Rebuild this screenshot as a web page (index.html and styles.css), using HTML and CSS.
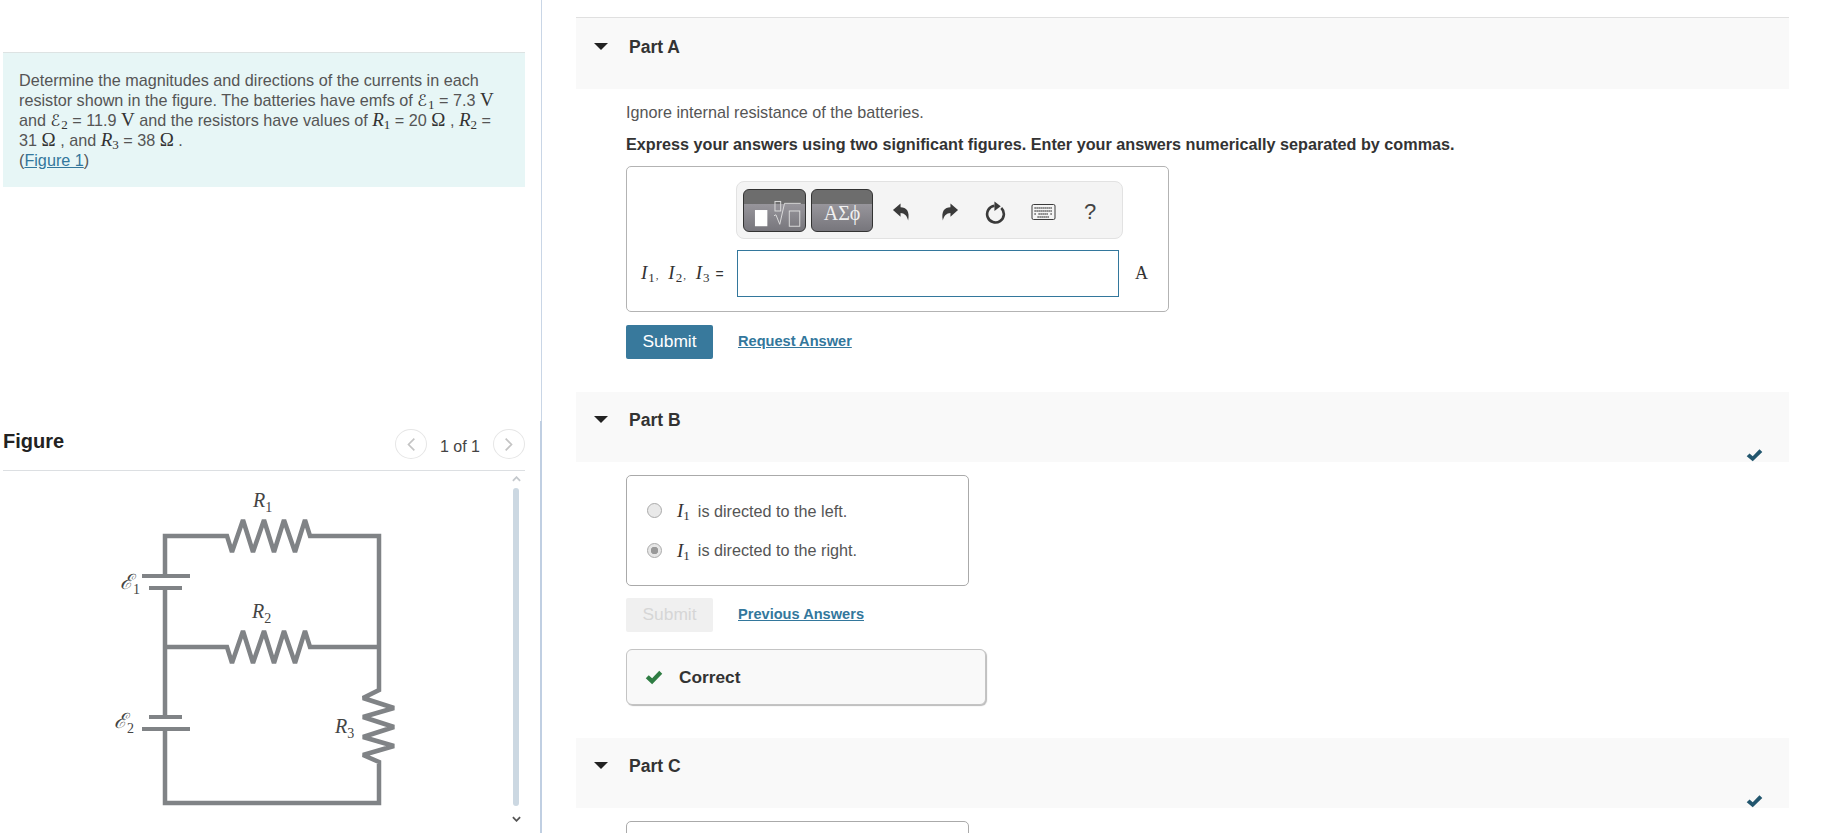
FILE: index.html
```html
<!DOCTYPE html>
<html lang="en">
<head>
<meta charset="utf-8">
<title>Part A</title>
<link rel="stylesheet" href="styles.css">
</head>
<body>
<div class="page">
  <aside class="left">
    <section class="top">
      <div class="problem">Determine the magnitudes and directions of the currents in each resistor shown in the figure. The batteries have emfs of <span class="m"><i class="scr">ℰ</i><sub>1</sub></span> = 7.3 <span class="m">V</span> and <span class="m"><i class="scr">ℰ</i><sub>2</sub></span> = 11.9 <span class="m">V</span> and the resistors have values of <span class="m"><i>R</i><sub>1</sub></span> = 20 <span class="m">Ω</span> , <span class="m"><i>R</i><sub>2</sub></span> = 31 <span class="m">Ω</span> , and <span class="m"><i>R</i><sub>3</sub></span> = 38 <span class="m">Ω</span> .<br>(<a href="#" class="link">Figure 1</a>)</div>
    </section>
    <section class="figure">
      <div class="fig-head">
        <h2 class="fig-title">Figure</h2>
        <div class="pager">
          <span class="circle"><svg class="chev" viewBox="0 0 12 18"><path d="M10 2 3 9l7 7"/></svg></span>
          <span class="pager-text">1 of 1</span>
          <span class="circle"><svg class="chev" viewBox="0 0 12 18"><path d="M2 2l7 7-7 7"/></svg></span>
        </div>
      </div>
      <div class="fig-body">
        <svg class="circuit" viewBox="3 471 504 362">
          <path class="wire" d="M165 576V536H227L232 552 243 520 253 552 264 520 274 552 284 520 295 552 305 520 310 536H379V690L363 698 394 708 363 717 394 727 363 737 394 746 363 755 379 762V803H165V729"/>
          <path class="wire" d="M165 717V588"/>
          <path class="wire" d="M165 647H227L232 663 243 631 253 663 264 631 274 663 284 631 295 663 305 631 310 647H379"/>
          <path class="plate" d="M142 576H190M149 588H182M149 717H182M142 729H190"/>
          <text class="lbl" x="253" y="507">R<tspan class="sb" dy="5">1</tspan></text>
          <text class="lbl" x="252" y="618">R<tspan class="sb" dy="5">2</tspan></text>
          <text class="lbl" x="335" y="733">R<tspan class="sb" dy="5">3</tspan></text>
          <text class="lbl scr-l" x="120" y="589">ℰ<tspan class="sb" dy="5">1</tspan></text>
          <text class="lbl scr-l" x="114" y="728">ℰ<tspan class="sb" dy="5">2</tspan></text>
        </svg>
        <div class="scroll">
          <svg class="arrow" viewBox="0 0 10 6"><path d="M1 5l4-4 4 4"/></svg>
          <div class="thumb"></div>
          <svg class="arrow dark" viewBox="0 0 10 6"><path d="M1 1l4 4 4-4"/></svg>
        </div>
      </div>
    </section>
  </aside>
  <main class="right">
    <header class="part first">
      <span class="tri"></span><h3 class="part-title">Part A</h3>
    </header>
    <div class="body">
      <p class="intro">Ignore internal resistance of the batteries.</p>
      <p class="bold">Express your answers using two significant figures. Enter your answers numerically separated by commas.</p>
      <div class="answer">
        <div class="toolbar">
          <span class="tb tb1"><svg class="tb-svg" viewBox="0 0 63 43"><rect class="fill" x="11" y="21" width="13" height="17"/><rect class="box" x="32" y="12" width="6" height="10"/><path class="box" d="M31 27l2-1 4 10 5-22h17"/><rect class="box" x="47" y="22" width="11" height="16"/></svg></span>
          <span class="tb tb2"><span class="greek">ΑΣϕ</span></span>
          <svg class="ic i-undo" viewBox="0 0 20 20"><path d="M1 8 9 1V5C15 5 19 9 17 19 16 14 13 11 9 11V15Z"/></svg>
          <svg class="ic i-redo" viewBox="0 0 20 20"><path d="M19 8 11 1V5C5 5 1 9 3 19 4 14 7 11 11 11V15Z"/></svg>
          <svg class="ic i-reset" viewBox="0 0 20 22"><path class="arc" d="M15.500 6.700A8 8 0 1 1 9 4.560"/><path d="M9 .5 15 5 9 9.500Z"/></svg>
          <svg class="ic i-key" viewBox="0 0 24 16"><rect class="kb" x=".5" y=".5" width="23" height="15" rx="1.5"/><path class="keys" d="M3 4h18M3 7h18M3 10h2M7 10h10M19 10h2M6 13h12"/></svg>
          <span class="help">?</span>
        </div>
        <div class="row">
          <label class="eq"><span class="m"><i>I</i><sub>1</sub><small>,</small> <i>I</i><sub>2</sub><small>,</small> <i>I</i><sub>3</sub></span><span class="eq-sign">=</span></label>
          <div class="input"></div>
          <span class="unit">A</span>
        </div>
      </div>
      <div class="actions">
        <button class="btn">Submit</button>
        <a href="#" class="link strong">Request Answer</a>
      </div>
    </div>
    <header class="part">
      <span class="tri"></span><h3 class="part-title">Part B</h3>
      <svg class="done" viewBox="0 0 24 24"><path d="M1 13 5 9 9.5 13 19 3 23 7 9.500 20Z"/></svg>
    </header>
    <div class="body">
      <div class="options">
        <div class="opt"><span class="radio"></span><span class="m"><i>I</i><sub>1</sub></span><span class="opt-text">is directed to the left.</span></div>
        <div class="opt"><span class="radio on"></span><span class="m"><i>I</i><sub>1</sub></span><span class="opt-text">is directed to the right.</span></div>
      </div>
      <div class="actions tight">
        <button class="btn off" disabled>Submit</button>
        <a href="#" class="link strong">Previous Answers</a>
      </div>
      <div class="correct">
        <svg class="tick" viewBox="0 0 24 20"><path d="M1 11 5 7 9.500 11 19 1 23 5 9.500 19Z"/></svg>
        <strong class="correct-text">Correct</strong>
      </div>
    </div>
    <header class="part">
      <span class="tri"></span><h3 class="part-title">Part C</h3>
      <svg class="done" viewBox="0 0 24 24"><path d="M1 13 5 9 9.5 13 19 3 23 7 9.500 20Z"/></svg>
    </header>
    <div class="body">
      <div class="options"></div>
    </div>
  </main>
</div>
</body>
</html>
```
FILE: styles.css
```css
* { box-sizing: border-box; }
html, body { margin: 0; height: 833px; overflow: hidden; background: #fff; }
body { font: 16.2px/20px "Liberation Sans", Arial, sans-serif; color: #555; }
.page { display: flex; height: 833px; }

.left { width: 542px; flex: none; display: flex; flex-direction: column; }
.top { height: 421px; padding: 52px 0 0 3px; border-right: 1px solid #c9d6e6; }
.problem { width: 522px; height: 135px; padding: 17px 12px 0 16px; background: #e7f6f6; border-top: 1px solid #dde3e3; }
.m { font-family: "Liberation Serif", "DejaVu Serif", serif; font-size: 19px; line-height: 1; color: #333; }
.m sub { font-size: 13px; line-height: 0; vertical-align: -3px; font-style: normal; }
.m small { font-size: 11px; margin-right: 3px; }
.scr { font-family: "DejaVu Sans", serif; font-size: 16px; line-height: 0; margin-right: 1px; }
.link { color: #33779c; text-decoration: underline; }
.strong { font-weight: 700; font-size: 14.6px; position: relative; top: -1px; }

.figure { flex: 1; border-right: 2px solid #c0cfe2; padding-left: 3px; display: flex; flex-direction: column; }
.fig-head { width: 522px; height: 50px; border-bottom: 1px solid #dcdfe2; display: flex; justify-content: space-between; align-items: flex-start; padding-top: 8px; }
.fig-title { margin: 0; font-size: 20px; line-height: 24px; font-weight: 700; color: #222; }
.pager { display: flex; align-items: center; gap: 13px; }
.circle { width: 32px; height: 30px; border: 1px solid #e6e6e6; border-radius: 50%; display: flex; align-items: center; justify-content: center; }
.chev { width: 10px; height: 15px; fill: none; stroke: #c4c4c4; stroke-width: 2; }
.pager-text { position: relative; top: 3px; font-size: 16px; color: #444; }
.fig-body { display: flex; height: 361px; }
.circuit { width: 504px; height: 362px; flex: none; }
.wire { fill: none; stroke: #808386; stroke-width: 4.5; stroke-linejoin: miter; stroke-miterlimit: 2; }
.plate { fill: none; stroke: #808386; stroke-width: 4; }
.lbl { font: italic 20px "Liberation Serif", "DejaVu Serif", serif; fill: #444; }
.scr-l { font-size: 21px; }
.sb { font-size: 14px; font-style: normal; }
.scroll { width: 18px; display: flex; flex-direction: column; align-items: center; padding-top: 5px; }
.arrow { width: 9px; height: 6px; fill: none; stroke: #c4c8cc; stroke-width: 2; flex: none; }
.arrow.dark { stroke: #555; margin-top: 10px; }
.thumb { width: 6px; height: 318px; margin-top: 6px; background: #ccd8e2; border-radius: 3px; }

.right { flex: 1; padding: 17px 33px 0 34px; overflow: hidden; }
.part { position: relative; height: 70px; background: #f9f9f9; display: flex; align-items: flex-start; padding-top: 18px; margin-top: 33px; }
.part.first { margin-top: 0; height: 72px; padding-top: 19px; border-top: 1px solid #e0e0e0; }
.tri { width: 0; height: 0; margin: 6px 0 0 18px; border: solid transparent; border-width: 7px 7px 0; border-top-color: #222; }
.part-title { margin: 0 0 0 21px; font-size: 17.5px; line-height: 20px; font-weight: 700; color: #333; }
.done { position: absolute; left: 1170px; top: 55px; width: 17px; height: 17px; fill: #22566e; }
.body { padding-left: 50px; }
.intro { margin: 0; padding-top: 13px; }
.bold { margin: 12px 0 12px; font-weight: 700; color: #333; }
.answer { width: 543px; height: 146px; border: 1px solid #b3b3b3; border-radius: 5px; padding: 14px 0 0 109px; }
.toolbar { width: 387px; height: 58px; background: #f4f4f4; border: 1px solid #e2e2e2; border-radius: 8px; display: flex; align-items: center; padding-left: 6px; }
.tb { width: 63px; height: 43px; border: 1px solid #333; border-radius: 6px; background: linear-gradient(#6d6d6d 0 35%, #97959b 35%, #77767c 100%); flex: none; overflow: hidden; }
.tb2 { margin-left: 5px; width: 62px; display: flex; align-items: center; justify-content: center; }
.tb-svg { display: block; width: 61px; height: 41px; }
.fill { fill: #fff; }
.box { fill: none; stroke: #ddd; stroke-width: 1; }
.greek { font: 20px/1 "Liberation Serif", serif; color: #f0f0f0; padding-top: 6px; }
.ic { flex: none; fill: #3a3a3a; margin-top: 4px; }
.i-undo { width: 19px; height: 20px; margin-left: 19px; }
.i-redo { width: 19px; height: 20px; margin-left: 29px; }
.i-reset { width: 21px; height: 23px; margin-left: 26px; }
.arc { fill: none; stroke: #3a3a3a; stroke-width: 2.5; }
.i-key { width: 25px; height: 16px; margin-left: 25px; fill: none; }
.kb { fill: #f4f4f4; stroke: #3a3a3a; stroke-width: 1; }
.keys { stroke: #333; stroke-width: 1.6; stroke-dasharray: 1.2 .8; }
.help { margin: 4px 0 0 28px; font-size: 22px; color: #444; }
.row { display: flex; align-items: center; margin: 11px 0 0 -95px; }
.eq { width: 96px; flex: none; color: #333; white-space: nowrap; }
.eq .m { letter-spacing: 1px; }
.eq-sign { margin-left: 5px; font-size: 14px; }
.input { width: 382px; height: 47px; border: 1px solid #33779c; background: #fff; flex: none; }
.unit { margin-left: 16px; font: 18px "Liberation Serif", serif; color: #333; }
.actions { display: flex; align-items: center; margin-top: 13px; gap: 25px; }
.actions.tight { margin-top: 12px; }
.btn { width: 87px; height: 34px; border: 0; border-radius: 2px; background: #38799c; color: #fff; font: 17.4px "Liberation Sans", sans-serif; padding: 0 0 2px; }
.btn.off { background: #f0f0f0; color: #d6d6d6; }
.options { width: 343px; height: 111px; margin-top: 13px; border: 1px solid #aaa; border-radius: 5px; padding: 15px 0 0 20px; }
.opt { display: flex; align-items: center; height: 39.500px; }
.radio { width: 15px; height: 15px; border: 1px solid #aaa; border-radius: 50%; background: #e9e9e9; margin-right: 15px; flex: none; }
.radio.on { background: radial-gradient(circle, #999 0 3.5px, #e6e6e6 4px); }
.opt-text { margin-left: 8px; }
.correct { width: 360px; height: 56px; margin-top: 17px; display: flex; align-items: center; padding-left: 18px; background: #f9f9f9; border: 1px solid #c4c4c4; border-radius: 6px; box-shadow: 1px 1px 1px #bbb; }
.tick { width: 18px; height: 15px; fill: #2f7d43; flex: none; }
.correct-text { margin-left: 16px; font-size: 17.3px; color: #333; }
```
